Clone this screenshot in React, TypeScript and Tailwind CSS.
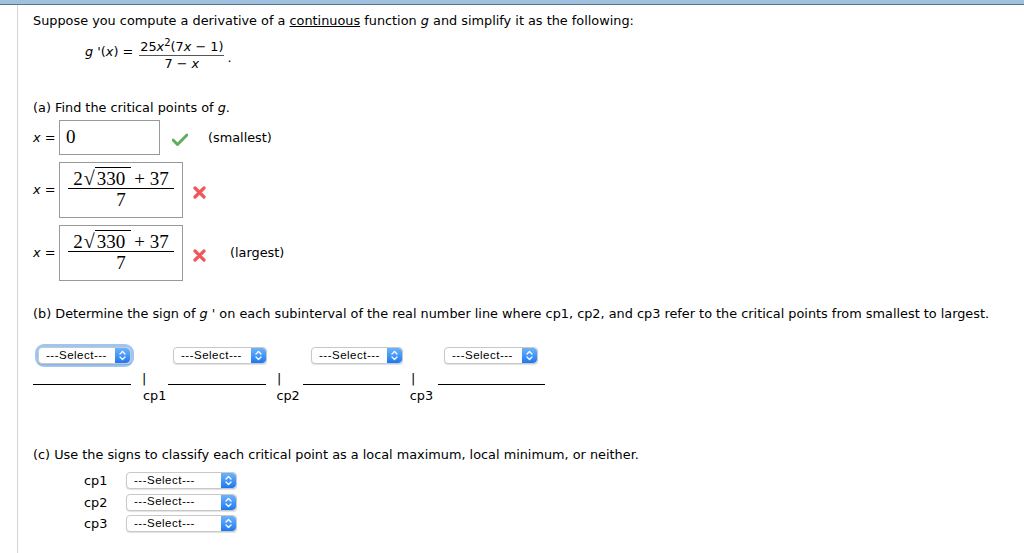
import React from 'react';

const sans = { fontFamily: '"DejaVu Sans", Verdana, sans-serif' };
const serif = { fontFamily: '"Liberation Serif", "Times New Roman", serif' };

function Stepper() {
  return (
    <div className="flex w-[15px] items-center justify-center self-stretch rounded-r-[4px] bg-gradient-to-b from-[#6cb3fa] to-[#1a78f0]">
      <svg width="7" height="11" viewBox="0 0 7 11" fill="none" stroke="white" strokeWidth="1.3" strokeLinecap="round" strokeLinejoin="round">
        <path d="M1 4 L3.5 1.5 L6 4" />
        <path d="M1 7 L3.5 9.5 L6 7" />
      </svg>
    </div>
  );
}

function Select({ w, focus = false }: { w: string; focus?: boolean }) {
  return (
    <div className={`${focus ? 'rounded-[6px] ring-[3px] ring-[#9ec5f3]' : ''}`}>
      <div className={`flex h-[17px] ${w} items-stretch overflow-hidden rounded-[4px] border border-[#c8c8c8] bg-white shadow-[0_1px_1px_rgba(0,0,0,0.12)]`}>
        <div className="flex flex-1 items-center pl-[7px] text-[11.5px] leading-none tracking-[0.5px] text-black" style={{ fontFamily: '"Liberation Sans", Arial, sans-serif' }}>
          ---Select---
        </div>
        <Stepper />
      </div>
    </div>
  );
}

function Check() {
  return (
    <svg width="16" height="13" viewBox="0 0 16 13">
      <path d="M1 7 L5.5 11.5 L15 2" fill="none" stroke="#5cae5c" strokeWidth="3" strokeLinecap="round" strokeLinejoin="round" />
    </svg>
  );
}

function Cross() {
  return (
    <svg width="13" height="13" viewBox="0 0 13 13">
      <path d="M2 2 L11 11 M11 2 L2 11" fill="none" stroke="#f0565c" strokeWidth="3.2" strokeLinecap="round" />
    </svg>
  );
}

function Frac() {
  return (
    <div className="flex flex-col items-center text-[19px] leading-none text-black" style={serif}>
      <div className="flex items-end border-b border-black px-[5px]">
        <span>2</span>
        <span className="ml-[1px] text-[20px]">√</span>
        <span className="border-t border-black pl-[2px] pr-[6px] pt-[1px]">330</span>
        <span className="ml-[3px]">+ 37</span>
      </div>
      <div className="pt-[1px]">7</div>
    </div>
  );
}

export default function App() {
  return (
    <div className="h-[553px] w-[1024px] overflow-hidden bg-white text-[12.85px] text-black" style={sans}>
      <div className="h-[4px] bg-[#9fc1df]" />
      <div className="h-[1px] bg-[#5b7384]" />
      <div className="ml-[17px] h-[548px] border-l border-[#d6d6d6] pl-[15px] pt-[8px]">
        <p className="leading-[16px]">
          Suppose you compute a derivative of a <span className="underline">continuous</span> function <i>g</i> and simplify it as the following:
        </p>

        <div className="mt-[10px] flex items-start pl-[52px]">
          <span className="mt-[3px]"><i>g</i> '(<i>x</i>) =</span>
          <div className="ml-[6px] flex flex-col items-center leading-[15px]">
            <span className="border-b border-[#555] px-[1px] pb-[1px]">
              25<i>x</i><sup className="text-[10px]">2</sup>(7<i>x</i> − 1)
            </span>
            <span>7 − <i>x</i></span>
          </div>
          <span className="ml-[3px] mt-[9px]">.</span>
        </div>

        <p className="mt-[29px] leading-[16px]">(a) Find the critical points of <i>g</i>.</p>

        <div className="mt-[4px] flex items-center">
          <span className="w-[26px]"><i>x</i> =</span>
          <div className="flex h-[35px] w-[101px] items-center border border-[#999] pl-[6px] text-[19px]" style={serif}>0</div>
          <div className="ml-[12px] mt-[3px]"><Check /></div>
          <span className="ml-[20px]">(smallest)</span>
        </div>

        <div className="mt-[7px] flex items-center">
          <span className="w-[26px]"><i>x</i> =</span>
          <div className="flex h-[56px] w-[124px] items-center justify-center border border-[#999] pb-[4px]">
            <Frac />
          </div>
          <div className="ml-[10px] mt-[5px]"><Cross /></div>
        </div>

        <div className="mt-[7px] flex items-center">
          <span className="w-[26px]"><i>x</i> =</span>
          <div className="flex h-[56px] w-[124px] items-center justify-center border border-[#999] pb-[4px]">
            <Frac />
          </div>
          <div className="ml-[10px] mt-[5px]"><Cross /></div>
          <span className="ml-[24px]">(largest)</span>
        </div>

        <p className="mt-[25px] leading-[16px]">
          (b) Determine the sign of <i>g</i> ' on each subinterval of the real number line where cp1, cp2, and cp3 refer to the critical points from smallest to largest.
        </p>

        <div className="mt-[25px] flex items-center">
          <div className="ml-[5px]"><Select w="w-[93px]" focus /></div>
          <div className="ml-[42px]"><Select w="w-[94px]" /></div>
          <div className="ml-[44px]"><Select w="w-[92px]" /></div>
          <div className="ml-[41px]"><Select w="w-[94px]" /></div>
        </div>

        <div className="mt-[9px] flex items-end">
          <div className="h-[1px] w-[98px] bg-black" />
          <div className="ml-[11px] w-[26px] leading-[12px]">|</div>
          <div className="h-[1px] w-[98px] bg-black" />
          <div className="ml-[11px] w-[26px] leading-[12px]">|</div>
          <div className="h-[1px] w-[97px] bg-black" />
          <div className="ml-[11px] w-[27px] leading-[12px]">|</div>
          <div className="h-[1px] w-[107px] bg-black" />
        </div>
        <div className="mt-[3px] flex leading-[16px]">
          <span className="ml-[110px]">cp1</span>
          <span className="ml-[110px]">cp2</span>
          <span className="ml-[110px]">cp3</span>
        </div>

        <p className="mt-[43px] leading-[16px]">(c) Use the signs to classify each critical point as a local maximum, local minimum, or neither.</p>

        <div className="mt-[9px] flex flex-col gap-[4.5px] pl-[51px]">
          {['cp1', 'cp2', 'cp3'].map((c) => (
            <div key={c} className="flex items-center">
              <span className="w-[42px] leading-[17px]">{c}</span>
              <Select w="w-[111px]" />
            </div>
          ))}
        </div>
      </div>
    </div>
  );
}
